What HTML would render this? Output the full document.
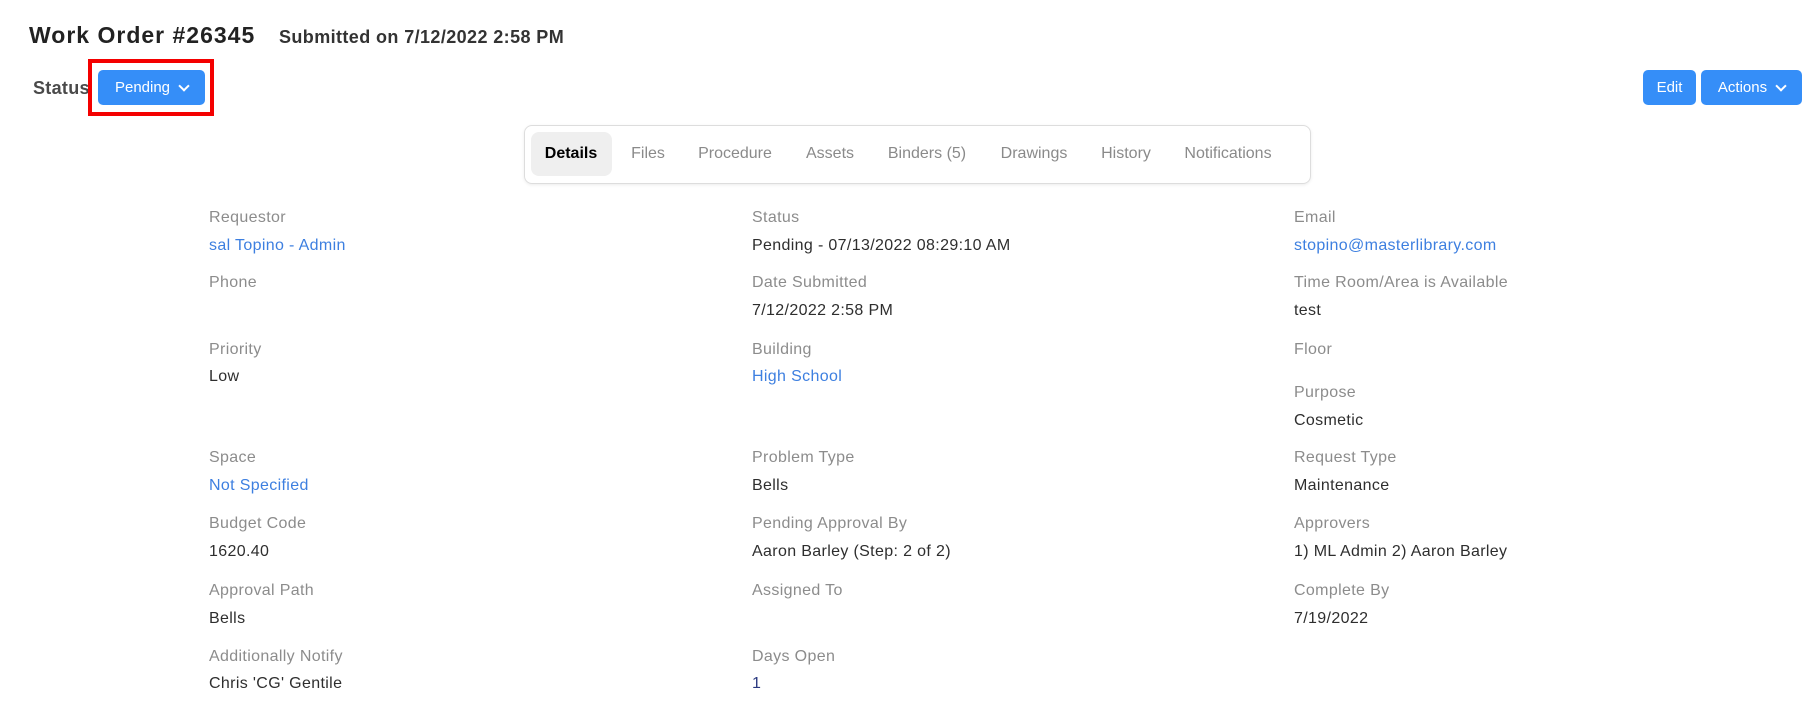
<!DOCTYPE html>
<html><head><meta charset="utf-8"><style>
*{margin:0;padding:0;box-sizing:border-box}
body{width:1812px;height:720px;background:#fff;font-family:"Liberation Sans",sans-serif;position:relative;overflow:hidden;color:#333}
.a{position:absolute;white-space:nowrap}
.btn{position:absolute;background:#358ef8;color:#fff;border-radius:5px;font-size:15px;display:flex;align-items:center;justify-content:center;gap:10px}
.chev{width:8px;height:8px;border-right:2px solid #fff;border-bottom:2px solid #fff;transform:rotate(45deg);margin-top:-4px}
.tab{position:absolute;top:145px;font-size:16px;color:#8a8a8a;transform:translateX(-50%)}
.l{position:absolute;font-size:16px;color:#8c8c8c;line-height:20px;letter-spacing:0.35px;white-space:nowrap}
.v{position:absolute;font-size:16px;color:#2e2e2e;line-height:20px;letter-spacing:0.35px;white-space:nowrap}
.k{color:#3d7fe0}
</style></head><body>
<div class="a" style="left:29px;top:22px;font-size:23px;font-weight:bold;color:#222;letter-spacing:1px">Work Order #26345</div>
<div class="a" style="left:279px;top:27px;font-size:18px;font-weight:bold;color:#333;letter-spacing:0.4px">Submitted on 7/12/2022 2:58 PM</div>
<div class="a" style="left:33px;top:78px;font-size:18px;font-weight:bold;color:#4a4a4a;letter-spacing:0.3px">Status</div>
<div class="a" style="left:88px;top:59px;width:126px;height:57px;border:4px solid #f40000;background:#fff"></div>
<div class="btn" style="left:98px;top:70px;width:107px;height:35px">Pending <span class="chev"></span></div>
<div class="btn" style="left:1643px;top:70px;width:53px;height:35px">Edit</div>
<div class="btn" style="left:1701px;top:70px;width:101px;height:35px">Actions <span class="chev"></span></div>
<div class="a" style="left:524px;top:125px;width:787px;height:59px;border:1px solid #ddd;border-radius:8px;box-shadow:0 1px 3px rgba(0,0,0,.08)"></div>
<div class="a" style="left:531px;top:132px;width:81px;height:44px;background:#efefef;border-radius:8px"></div>
<div class="tab" style="left:571px;color:#000;font-weight:bold">Details</div>
<div class="tab" style="left:648px">Files</div>
<div class="tab" style="left:735px">Procedure</div>
<div class="tab" style="left:830px">Assets</div>
<div class="tab" style="left:927px">Binders (5)</div>
<div class="tab" style="left:1034px">Drawings</div>
<div class="tab" style="left:1126px">History</div>
<div class="tab" style="left:1228px">Notifications</div>

<div class="l" style="left:209px;top:208px">Requestor</div>
<div class="v k" style="left:209px;top:236px">sal Topino - Admin</div>
<div class="l" style="left:209px;top:273px">Phone</div>
<div class="l" style="left:209px;top:340px">Priority</div>
<div class="v" style="left:209px;top:367px">Low</div>
<div class="l" style="left:209px;top:448px">Space</div>
<div class="v k" style="left:209px;top:476px">Not Specified</div>
<div class="l" style="left:209px;top:514px">Budget Code</div>
<div class="v" style="left:209px;top:542px">1620.40</div>
<div class="l" style="left:209px;top:581px">Approval Path</div>
<div class="v" style="left:209px;top:609px">Bells</div>
<div class="l" style="left:209px;top:647px">Additionally Notify</div>
<div class="v" style="left:209px;top:674px">Chris 'CG' Gentile</div>

<div class="l" style="left:752px;top:208px">Status</div>
<div class="v" style="left:752px;top:236px">Pending - 07/13/2022 08:29:10 AM</div>
<div class="l" style="left:752px;top:273px">Date Submitted</div>
<div class="v" style="left:752px;top:301px">7/12/2022 2:58 PM</div>
<div class="l" style="left:752px;top:340px">Building</div>
<div class="v k" style="left:752px;top:367px">High School</div>
<div class="l" style="left:752px;top:448px">Problem Type</div>
<div class="v" style="left:752px;top:476px">Bells</div>
<div class="l" style="left:752px;top:514px">Pending Approval By</div>
<div class="v" style="left:752px;top:542px">Aaron Barley (Step: 2 of 2)</div>
<div class="l" style="left:752px;top:581px">Assigned To</div>
<div class="l" style="left:752px;top:647px">Days Open</div>
<div class="v" style="left:752px;top:674px;color:#2b3a80">1</div>

<div class="l" style="left:1294px;top:208px">Email</div>
<div class="v k" style="left:1294px;top:236px">stopino@masterlibrary.com</div>
<div class="l" style="left:1294px;top:273px">Time Room/Area is Available</div>
<div class="v" style="left:1294px;top:301px">test</div>
<div class="l" style="left:1294px;top:340px">Floor</div>
<div class="l" style="left:1294px;top:383px">Purpose</div>
<div class="v" style="left:1294px;top:411px">Cosmetic</div>
<div class="l" style="left:1294px;top:448px">Request Type</div>
<div class="v" style="left:1294px;top:476px">Maintenance</div>
<div class="l" style="left:1294px;top:514px">Approvers</div>
<div class="v" style="left:1294px;top:542px">1) ML Admin 2) Aaron Barley</div>
<div class="l" style="left:1294px;top:581px">Complete By</div>
<div class="v" style="left:1294px;top:609px">7/19/2022</div>
</body></html>
